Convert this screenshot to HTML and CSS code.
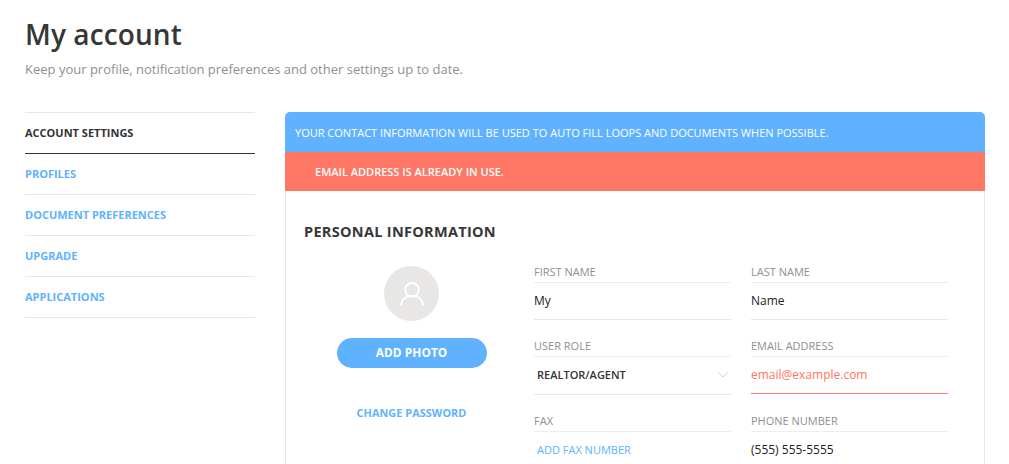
FILE: index.html
```html
<!DOCTYPE html>
<html lang="en">
<head>
<meta charset="utf-8">
<title>My account</title>
<link rel="stylesheet" href="styles.css">
</head>
<body>
<div class="page">
  <header class="head">
    <h1>My account</h1>
    <p>Keep your profile, notification preferences and other settings up to date.</p>
  </header>
  <div class="columns">
    <nav class="side">
      <a class="item active">ACCOUNT SETTINGS</a>
      <a class="item">PROFILES</a>
      <a class="item">DOCUMENT PREFERENCES</a>
      <a class="item">UPGRADE</a>
      <a class="item">APPLICATIONS</a>
    </nav>
    <main class="main">
      <div class="banner info">YOUR CONTACT INFORMATION WILL BE USED TO AUTO FILL LOOPS AND DOCUMENTS WHEN POSSIBLE.</div>
      <div class="banner error">EMAIL ADDRESS IS ALREADY IN USE.</div>
      <section class="card">
        <h2>PERSONAL INFORMATION</h2>
        <div class="body">
          <div class="photo">
            <div class="avatar">
              <svg width="24" height="24" viewBox="0 0 24 24" fill="none" stroke="#fff" stroke-width="2">
                <circle cx="12" cy="7.8" r="6.8"/>
                <path d="M1 23.500C1.500 17.500 6 14 12 14s10.500 3.500 11 9.500"/>
              </svg>
            </div>
            <button class="add">ADD PHOTO</button>
            <a class="change">CHANGE PASSWORD</a>
          </div>
          <div class="fields">
            <div class="field"><label>FIRST NAME</label><div class="value">My</div></div>
            <div class="field"><label>LAST NAME</label><div class="value">Name</div></div>
            <div class="field"><label>USER ROLE</label>
              <div class="value select"><span>REALTOR/AGENT</span>
                <svg width="10" height="6" viewBox="0 0 10 6" fill="none" stroke="#cfcfcf" stroke-width="1"><path d="M.5.5 5 5 9.500.5"/></svg>
              </div>
            </div>
            <div class="field"><label>EMAIL ADDRESS</label><div class="value bad">email@example.com</div></div>
            <div class="field"><label>FAX</label><div class="value link">ADD FAX NUMBER</div></div>
            <div class="field"><label>PHONE NUMBER</label><div class="value">(555) 555-5555</div></div>
          </div>
        </div>
      </section>
    </main>
  </div>
</div>
</body>
</html>
```
FILE: styles.css
```css
* { box-sizing: border-box; }
html, body { margin: 0; height: 100%; overflow: hidden; }
body { background: #fff; font-family: "Open Sans", "Liberation Sans", sans-serif; color: #333; }
.page { padding: 14px 24px 0 25px; }
.head { height: 98px; }
.head h1 { margin: 0; font-size: 28px; line-height: 41px; font-weight: 600; color: #373737; letter-spacing: 0.1px; }
.head p { margin: 5px 0 0; font-size: 13px; line-height: 18px; color: #8f8f8f; }
.columns { display: flex; gap: 30px; align-items: flex-start; }
.side { width: 230px; flex: none; display: flex; flex-direction: column; border-top: 1px solid #e6e6e6; }
.item { height: 41px; padding-bottom: 2px; display: flex; align-items: center; font-size: 11px; font-weight: 700; color: #60b2ff; border-bottom: 1px solid #e6e6e6; }
.item.active { color: #333; border-bottom-color: #333; }
.main { width: 700px; flex: none; }
.banner { display: flex; align-items: center; color: #fff; font-size: 11px; }
.info { height: 40px; padding-left: 10px; background: #60b2ff; border-radius: 5px 5px 0 0; }
.error { height: 39px; padding-left: 30px; background: #ff7664; font-weight: 600; }
.card { border: 1px solid #e6e6e6; border-top: 0; padding: 31px 36px 0 18px; height: 300px; }
.card h2 { margin: 0; font-size: 14.500px; line-height: 20px; font-weight: 700; color: #373737; letter-spacing: 0.3px; }
.body { display: flex; margin-top: 24px; }
.photo { width: 215px; margin-right: 15px; flex: none; display: flex; flex-direction: column; align-items: center; }
.avatar { width: 55px; height: 55px; border-radius: 50%; background: #e8e7e6; display: flex; align-items: center; justify-content: center; overflow: hidden; }
.add { margin-top: 17px; width: 150px; height: 30px; padding: 0 0 2px; border: 0; border-radius: 15px; background: #60b2ff; color: #fff; font: 700 11.800px "Open Sans", sans-serif; letter-spacing: 0.1px; }
.change { margin-top: 37px; font-size: 10.800px; line-height: 16px; font-weight: 700; color: #60b2ff; letter-spacing: 0.1px; }
.fields { flex: 1; display: grid; grid-template-columns: 197px 197px; column-gap: 20px; }
.field { display: flex; flex-direction: column; height: 74px; }
.field:nth-child(n+3) { height: 75px; }
label { height: 17px; font-size: 11px; line-height: 11px; font-weight: 500; color: #8f8f8f; border-bottom: 1px solid #eeeeee; }
.value { height: 37px; padding-bottom: 2px; display: flex; align-items: center; font-size: 12px; color: #222; border-bottom: 1px solid #e6e6e6; }
.select { height: 38px; padding: 0 3px 2px; justify-content: space-between; font-size: 11px; font-weight: 600; color: #333; }
.bad { color: #ff7664; border-bottom-color: #ff7664; }
.link { padding-left: 3px; font-size: 11px; color: #60b2ff; border-bottom: 0; }
```
